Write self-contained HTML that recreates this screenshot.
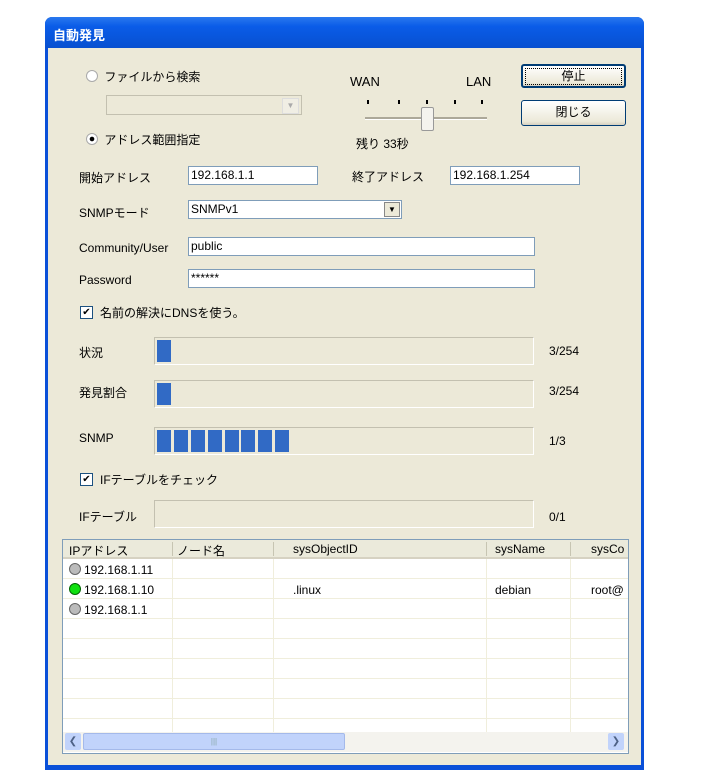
<!DOCTYPE html>
<html><head><meta charset="utf-8"><style>
body{margin:0;width:701px;height:780px;background:#fff;position:relative;font-family:"Liberation Sans","Noto Sans CJK JP",sans-serif;font-size:12px;color:#000;overflow:hidden}
.a{position:absolute}
.win{left:45px;top:17px;width:599px;height:753px;background:#0a50d8;border-radius:7px 7px 0 0}
.title{left:45px;top:17px;width:599px;height:31px;background:linear-gradient(#2a78ee,#0a5ce8 30%,#0850d0);border-radius:7px 7px 0 0;color:#fff;font-weight:bold;font-size:13px}
.body{left:48px;top:48px;width:593px;height:717px;background:#ece9d8}
.inp{background:#fff;border:1px solid #7f9db9;height:19px;box-sizing:border-box;padding:1px 2px;font-size:12px;line-height:15px}
.btn{border:1px solid #003c74;border-radius:3px;background:linear-gradient(#fff,#ece9d8 85%,#d6d0c0);box-sizing:border-box;text-align:center;line-height:22px}
.bar{border:1px solid #c3c0b0;border-bottom-color:#fff;border-right-color:#fff;box-sizing:border-box;background:#ece9d8}
.blk{position:absolute;top:2px;width:14px;height:22px;background:#316ac5}
.col{position:absolute;top:0;height:192px;border-right:1px solid #f0eedc;box-sizing:border-box}
.row{position:absolute;left:0;width:565px;border-bottom:1px solid #f0eedc;height:20px;box-sizing:border-box}
.dot{display:inline-block;width:10px;height:10px;border-radius:50%;border:1px solid #666;vertical-align:-1px;margin-right:3px}
</style></head><body>
<div class="a win"></div>
<div class="a title"><span class="a" style="left:8px;top:8px">自動発見</span></div>
<div class="a body"></div>

<span class="a" style="left:86px;top:68px"><span class="dot" style="background:#fff;border-color:#aaa"></span> ファイルから検索</span>
<div class="a" style="left:106px;top:95px;width:196px;height:20px;border:1px solid #c3c0b0;box-sizing:border-box;background:#ece9d8"><div class="a" style="right:2px;top:2px;width:15px;height:14px;background:#f0eee4;border:1px solid #ddd;color:#aaa;font-size:8px;text-align:center;line-height:14px">▼</div></div>
<span class="a" style="left:86px;top:131px"><span class="dot" style="background:radial-gradient(#000 30%,#fff 35%);border-color:#aaa"></span> アドレス範囲指定</span>

<span class="a" style="left:350px;top:74px;font-size:13px">WAN</span>
<span class="a" style="left:466px;top:74px;font-size:13px">LAN</span>
<div class="a" style="left:367px;top:100px;width:2px;height:4px;background:#000"></div>
<div class="a" style="left:398px;top:100px;width:2px;height:4px;background:#000"></div>
<div class="a" style="left:426px;top:100px;width:2px;height:4px;background:#000"></div>
<div class="a" style="left:454px;top:100px;width:2px;height:4px;background:#000"></div>
<div class="a" style="left:481px;top:100px;width:2px;height:4px;background:#000"></div>
<div class="a" style="left:365px;top:117px;width:122px;height:2px;background:#aca899;border-bottom:1px solid #fff"></div>
<div class="a" style="left:421px;top:107px;width:11px;height:22px;background:#f4f3ee;border:1px solid #999;border-radius:2px"></div>
<span class="a" style="left:356px;top:135px">残り 33秒</span>

<div class="a btn" style="left:521px;top:64px;width:105px;height:24px;border-width:2px"><div style="margin:2px;border:1px dotted #000;line-height:15px">停止</div></div>
<div class="a btn" style="left:521px;top:100px;width:105px;height:26px">閉じる</div>

<span class="a" style="left:79px;top:169px">開始アドレス</span>
<div class="a inp" style="left:188px;top:166px;width:130px">192.168.1.1</div>
<span class="a" style="left:352px;top:168px">終了アドレス</span>
<div class="a inp" style="left:450px;top:166px;width:130px">192.168.1.254</div>

<span class="a" style="left:79px;top:204px">SNMPモード</span>
<div class="a inp" style="left:188px;top:200px;width:214px">SNMPv1<div class="a" style="right:1px;top:1px;width:16px;height:15px;background:#ece9d8;border:1px solid #888;box-sizing:border-box;font-size:8px;text-align:center;line-height:13px">▼</div></div>

<span class="a" style="left:79px;top:241px">Community/User</span>
<div class="a inp" style="left:188px;top:237px;width:347px">public</div>
<span class="a" style="left:79px;top:273px">Password</span>
<div class="a inp" style="left:188px;top:269px;width:347px">******</div>

<div class="a" style="left:80px;top:306px;width:11px;height:11px;border:1px solid #1c5180;background:#fff;font-size:10px;line-height:11px;text-align:center">✔</div>
<span class="a" style="left:100px;top:304px">名前の解決にDNSを使う。</span>

<span class="a" style="left:79px;top:344px">状況</span>
<div class="a bar" style="left:154px;top:337px;width:380px;height:28px"><div class="blk" style="left:2px"></div></div>
<span class="a" style="left:549px;top:344px">3/254</span>
<span class="a" style="left:79px;top:384px">発見割合</span>
<div class="a bar" style="left:154px;top:380px;width:380px;height:28px"><div class="blk" style="left:2px"></div></div>
<span class="a" style="left:549px;top:384px">3/254</span>
<span class="a" style="left:79px;top:431px">SNMP</span>
<div class="a bar" style="left:154px;top:427px;width:380px;height:28px">
<div class="blk" style="left:2px"></div><div class="blk" style="left:19px"></div><div class="blk" style="left:36px"></div><div class="blk" style="left:53px"></div><div class="blk" style="left:70px"></div><div class="blk" style="left:86px"></div><div class="blk" style="left:103px"></div><div class="blk" style="left:120px"></div></div>
<span class="a" style="left:549px;top:434px">1/3</span>

<div class="a" style="left:80px;top:473px;width:11px;height:11px;border:1px solid #1c5180;background:#fff;font-size:10px;line-height:11px;text-align:center">✔</div>
<span class="a" style="left:100px;top:471px">IFテーブルをチェック</span>
<span class="a" style="left:79px;top:508px">IFテーブル</span>
<div class="a bar" style="left:154px;top:500px;width:380px;height:28px"></div>
<span class="a" style="left:549px;top:510px">0/1</span>

<div class="a" style="left:62px;top:539px;width:565px;height:213px;border:1px solid #7f9db9;background:#fff;overflow:hidden">
 <div class="a" style="left:0;top:0;width:565px;height:17px;background:#ebeadb;border-bottom:2px solid #d6d2c2"></div>
 <span class="a" style="left:6px;top:2px">IPアドレス</span>
 <span class="a" style="left:114px;top:2px">ノード名</span>
 <span class="a" style="left:230px;top:2px">sysObjectID</span>
 <span class="a" style="left:432px;top:2px">sysName</span>
 <span class="a" style="left:528px;top:2px">sysCo</span>
 <div class="a" style="left:109px;top:2px;width:1px;height:14px;background:#c7c5b2"></div>
 <div class="a" style="left:210px;top:2px;width:1px;height:14px;background:#c7c5b2"></div>
 <div class="a" style="left:423px;top:2px;width:1px;height:14px;background:#c7c5b2"></div>
 <div class="a" style="left:507px;top:2px;width:1px;height:14px;background:#c7c5b2"></div>
 <div class="a" style="left:0;top:19px;width:565px;height:172px">
  <div class="row" style="top:0"></div><div class="row" style="top:20px"></div><div class="row" style="top:40px"></div><div class="row" style="top:60px"></div><div class="row" style="top:80px"></div><div class="row" style="top:100px"></div><div class="row" style="top:120px"></div><div class="row" style="top:140px"></div>
  <div class="col" style="left:0;width:110px"></div><div class="col" style="left:110px;width:101px"></div><div class="col" style="left:211px;width:213px"></div><div class="col" style="left:424px;width:84px"></div>
  <span class="a" style="left:6px;top:4px"><span class="dot" style="background:#bbb"></span>192.168.1.11</span>
  <span class="a" style="left:6px;top:24px"><span class="dot" style="background:#10e010;border-color:#060"></span>192.168.1.10</span>
  <span class="a" style="left:230px;top:24px">.linux</span>
  <span class="a" style="left:432px;top:24px">debian</span>
  <span class="a" style="left:528px;top:24px">root@</span>
  <span class="a" style="left:6px;top:44px"><span class="dot" style="background:#bbb"></span>192.168.1.1</span>
 </div>
 <div class="a" style="left:0;top:192px;width:565px;height:20px;background:#f4f3ee"></div>
 <div class="a" style="left:2px;top:193px;width:16px;height:17px;background:#c1d3fb;border-radius:2px;font-size:10px;text-align:center;line-height:17px;color:#4d6185">❮</div>
 <div class="a" style="left:20px;top:193px;width:262px;height:17px;background:#c1d3fb;border:1px solid #a4b9ea;box-sizing:border-box;border-radius:2px;font-size:8px;color:#8aa;text-align:center;line-height:15px">|||</div>
 <div class="a" style="left:545px;top:193px;width:16px;height:17px;background:#c1d3fb;border-radius:2px;font-size:10px;text-align:center;line-height:17px;color:#4d6185">❯</div>
</div>
</body></html>
